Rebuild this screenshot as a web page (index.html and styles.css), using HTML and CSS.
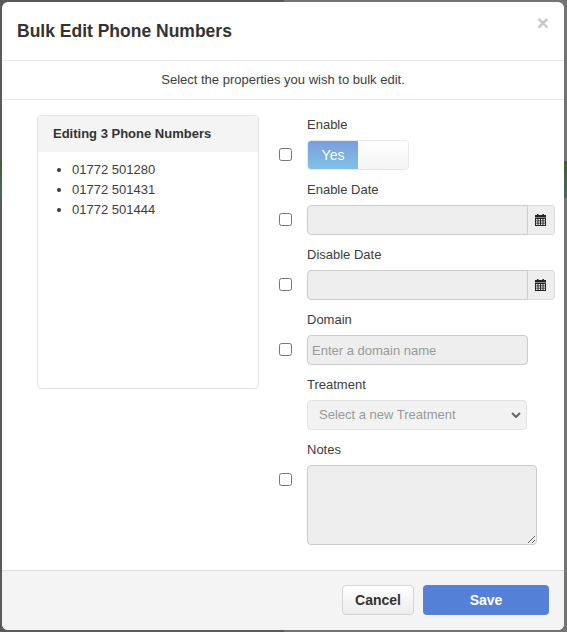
FILE: index.html
```html
<!DOCTYPE html>
<html lang="en">
<head>
    <meta charset="UTF-8">
    <meta name="viewport" content="width=device-width, initial-scale=1.0">
    <link rel="stylesheet" href="styles.css">
    <title>Bulk Edit Phone Numbers</title>
</head>
<body>
    <div class="backdrop-band"></div>
    <div class="modal">
        <div class="modal-header">
            <h4 class="modal-title">Bulk Edit Phone Numbers</h4>
            <span class="close">&times;</span>
        </div>
        <div class="modal-intro">Select the properties you wish to bulk edit.</div>
        <div class="modal-body">
            <div class="panel">
                <div class="panel-heading">Editing 3 Phone Numbers</div>
                <ul class="panel-list">
                    <li>01772 501280</li>
                    <li>01772 501431</li>
                    <li>01772 501444</li>
                </ul>
            </div>
            <div class="fields">
                <div class="field">
                    <input type="checkbox" class="check">
                    <div class="control">
                        <label class="label">Enable</label>
                        <div class="switch">
                            <span class="switch-on">Yes</span>
                            <span class="switch-off"></span>
                        </div>
                    </div>
                </div>
                <div class="field">
                    <input type="checkbox" class="check">
                    <div class="control">
                        <label class="label">Enable Date</label>
                        <div class="input-group">
                            <input type="text" class="input input-date" disabled>
                            <span class="addon">
                                <svg width="11" height="12" viewBox="0 0 11 12"><path fill="#222" d="M2 0h1.500v2H2zM7.500 0H9v2H7.500zM0 1h11v2.500H0zM0 4h11v8H0z"/><path fill="#eee" d="M1 5h1.500v1.500H1zM3.500 5H5v1.500H3.500zM6 5h1.500v1.500H6zM8.500 5H10v1.500H8.500zM1 7.250h1.500v1.500H1zM3.500 7.250H5v1.500H3.500zM6 7.250h1.500v1.500H6zM8.500 7.250H10v1.500H8.500zM1 9.500h1.500V11H1zM3.500 9.500H5V11H3.500zM6 9.500h1.500V11H6zM8.500 9.500H10V11H8.500z"/></svg>
                            </span>
                        </div>
                    </div>
                </div>
                <div class="field">
                    <input type="checkbox" class="check">
                    <div class="control">
                        <label class="label">Disable Date</label>
                        <div class="input-group">
                            <input type="text" class="input input-date" disabled>
                            <span class="addon">
                                <svg width="11" height="12" viewBox="0 0 11 12"><path fill="#222" d="M2 0h1.500v2H2zM7.500 0H9v2H7.500zM0 1h11v2.500H0zM0 4h11v8H0z"/><path fill="#eee" d="M1 5h1.500v1.500H1zM3.500 5H5v1.500H3.500zM6 5h1.500v1.500H6zM8.500 5H10v1.500H8.500zM1 7.250h1.500v1.500H1zM3.500 7.250H5v1.500H3.500zM6 7.250h1.500v1.500H6zM8.500 7.250H10v1.500H8.500zM1 9.500h1.500V11H1zM3.500 9.500H5V11H3.500zM6 9.500h1.500V11H6zM8.500 9.500H10V11H8.500z"/></svg>
                            </span>
                        </div>
                    </div>
                </div>
                <div class="field">
                    <input type="checkbox" class="check">
                    <div class="control">
                        <label class="label">Domain</label>
                        <input type="text" class="input input-domain" placeholder="Enter a domain name" disabled>
                    </div>
                </div>
                <div class="field">
                    <div class="control control-nocheck">
                        <label class="label">Treatment</label>
                        <div class="select">
                            <span>Select a new Treatment</span>
                            <svg width="10" height="6" viewBox="0 0 10 6"><path fill="none" stroke="#666" stroke-width="2" d="M1 1l4 4 4-4"/></svg>
                        </div>
                    </div>
                </div>
                <div class="field">
                    <input type="checkbox" class="check">
                    <div class="control">
                        <label class="label">Notes</label>
                        <textarea class="textarea" disabled></textarea>
                    </div>
                </div>
            </div>
        </div>
        <div class="modal-footer">
            <button class="btn btn-cancel">Cancel</button>
            <button class="btn btn-save">Save</button>
        </div>
    </div>
</body>
</html>
```

FILE: styles.css
```css
html, body {
    height: 100%;
}

body {
    margin: 0;
    padding: 2px 3px 2px 2px;
    box-sizing: border-box;
    background: linear-gradient(to right, #5a5a5a 50%, #747474 50%);
    font-family: 'Liberation Sans', Arial, sans-serif;
    font-size: 13px;
    line-height: 20px;
    color: #3d3d3d;
    overflow: hidden;
}

.backdrop-band {
    position: absolute;
    left: 0;
    right: 0;
    top: 161px;
    height: 37px;
    background: linear-gradient(to bottom, #43602f, #4a6a60);
}

.modal {
    position: relative;
    height: 628px;
    display: flex;
    flex-direction: column;
    background-color: #fff;
    border-radius: 6px;
    overflow: hidden;
}

.modal-header {
    height: 59px;
    flex: none;
    box-sizing: border-box;
    padding: 19px 15px 0;
    display: flex;
    justify-content: space-between;
    border-bottom: 1px solid #e9e9e9;
}

.modal-title {
    margin: 0;
    font-size: 17.5px;
    line-height: 20px;
    font-weight: bold;
    color: #333;
}

.close {
    margin: -8px 0 0;
    font-size: 21px;
    font-weight: bold;
    line-height: 20px;
    color: #c8c8c8;
}

.modal-intro {
    height: 39px;
    flex: none;
    box-sizing: border-box;
    padding-top: 9px;
    text-align: center;
    border-bottom: 1px solid #e9e9e9;
}

.modal-body {
    flex: 1;
    display: flex;
    padding: 15px 0 0 35px;
}

.panel {
    width: 222px;
    height: 274px;
    box-sizing: border-box;
    flex: none;
    border: 1px solid #e3e3e3;
    border-radius: 4px;
    overflow: hidden;
}

.panel-heading {
    height: 36px;
    box-sizing: border-box;
    padding: 8px 15px;
    background-color: #f4f4f4;
    font-weight: bold;
    color: #333;
}

.panel-list {
    margin: 8px 0 0;
    padding-left: 34px;
}

.fields {
    margin: 1px 0 0 20px;
    display: flex;
    flex-direction: column;
    gap: 11px;
}

.field {
    display: flex;
    align-items: flex-start;
}

.check {
    appearance: none;
    width: 13px;
    height: 13px;
    box-sizing: border-box;
    margin: 32px 15px 0 0;
    border: 1px solid #767676;
    border-radius: 2.5px;
    background-color: #fff;
}

.control {
    display: flex;
    flex-direction: column;
}

.control-nocheck {
    margin-left: 28px;
}

.label {
    height: 16px;
    padding-top: 1px;
    line-height: 16px;
    margin-bottom: 7px;
}

.switch {
    width: 102px;
    height: 30px;
    box-sizing: border-box;
    display: flex;
    border: 1px solid #e8e8e8;
    border-radius: 4px;
    overflow: hidden;
}

.switch-on {
    width: 50px;
    text-align: center;
    font-size: 14px;
    line-height: 28px;
    color: #fff;
    background: linear-gradient(to bottom, #7a9ee0, #7fc1e6);
}

.switch-off {
    flex: 1;
    background: linear-gradient(to bottom, #fff, #f4f4f4);
}

.input {
    height: 30px;
    box-sizing: border-box;
    padding: 0 4px;
    border: 1px solid #ccc;
    border-radius: 4px;
    background-color: #eee;
    font: inherit;
    outline: none;
}

.input::placeholder {
    color: #999;
}

.input-group {
    display: flex;
}

.input-date {
    width: 221px;
    border-radius: 4px 0 0 4px;
}

.addon {
    width: 27px;
    height: 30px;
    box-sizing: border-box;
    display: flex;
    align-items: center;
    justify-content: center;
    padding-right: 2px;
    border: 1px solid #ddd;
    border-left: 0;
    border-radius: 0 4px 4px 0;
    background-color: #eee;
}

.input-domain {
    width: 221px;
}

.select {
    width: 220px;
    height: 30px;
    box-sizing: border-box;
    display: flex;
    align-items: center;
    justify-content: space-between;
    padding: 0 5px 0 11px;
    border: 1px solid #e3e3e3;
    border-radius: 4px;
    background-color: #f2f2f2;
    color: #999;
}

.textarea {
    width: 230px;
    height: 80px;
    box-sizing: border-box;
    display: block;
    border: 1px solid #ccc;
    border-radius: 4px;
    background-color: #eee;
}

.modal-footer {
    height: 60px;
    flex: none;
    box-sizing: border-box;
    display: flex;
    justify-content: flex-end;
    gap: 9px;
    padding: 14px 15px 0 0;
    background-color: #f4f4f4;
    border-top: 1px solid #ddd;
}

.btn {
    height: 30px;
    box-sizing: border-box;
    border-radius: 4px;
    font-family: inherit;
    font-size: 14px;
    font-weight: bold;
}

.btn-cancel {
    width: 72px;
    color: #333;
    border: 1px solid #d4d4d4;
    background: linear-gradient(to bottom, #fff, #ececec);
}

.btn-save {
    width: 126px;
    color: #fff;
    border: 0;
    background-color: #5580d8;
}
```
